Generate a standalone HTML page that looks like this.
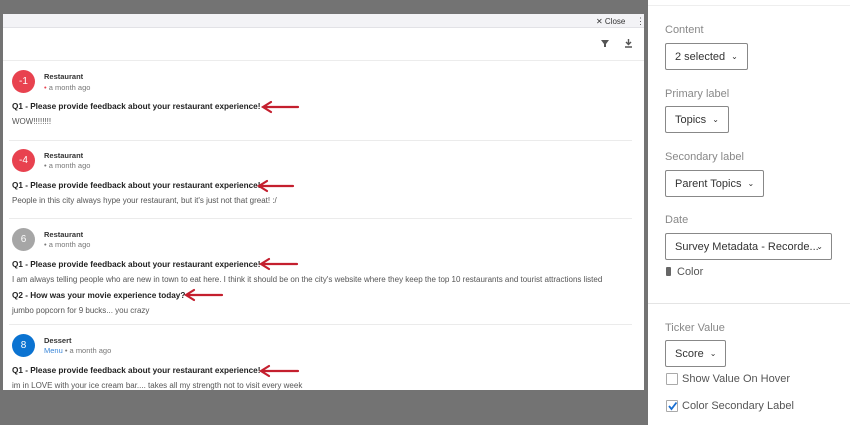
<!DOCTYPE html>
<html><head><style>
*{margin:0;padding:0;box-sizing:border-box}
body{width:850px;height:425px;overflow:hidden;background:#737373;font-family:"Liberation Sans",sans-serif;position:relative}
.a{position:absolute}
.modal{left:3px;top:14px;width:641px;height:376px;background:#fff}
.hdr{left:0;top:0;width:641px;height:14px;background:#f3f3f6;border-bottom:1px solid #e2e2e6}
.tb{left:0;top:46px;width:641px;height:1px;background:#ececec}
.av{width:23px;height:23px;border-radius:50%;color:#fff;font-size:10px;text-align:center;line-height:23px}
.nm{font-size:7.5px;font-weight:bold;color:#333}
.tm{font-size:7.5px;color:#777}
.q{font-size:8.2px;font-weight:bold;color:#222}
.ans{font-size:8px;color:#555}
.sep{left:9px;width:623px;height:1px;background:#ebebeb}
.panel{left:648px;top:0;width:202px;height:425px;background:#fff}
.lbl{font-size:11px;color:#888;left:17px}
.dd{left:17px;height:27px;border:1px solid #888;border-radius:2px;font-size:11px;color:#333;padding:0 9px;display:flex;align-items:center;white-space:nowrap}
.dd span{font-size:8px;margin-left:6px}
.cb{left:18px;width:12px;height:12px;border:1px solid #aaa;border-radius:1px}
.ct{left:34px;font-size:11px;color:#555}
</style></head><body>
<div class="a modal">
 <div class="a hdr"></div>
 <div class="a" style="left:593px;top:3px;font-size:8px;color:#333">✕ Close</div>
 <div class="a" style="left:633px;top:2px;font-size:9px;color:#555">⋮</div>
 <svg class="a" style="left:598px;top:26px" width="9" height="8"><path d="M0 0H8L5 4V7L3 7V4Z" fill="#555"/></svg>
 <svg class="a" style="left:621px;top:25px" width="9" height="9"><path d="M4.5 0V5M2 3L4.5 5.5 7 3M1 8H8" stroke="#555" stroke-width="1.4" fill="none"/></svg>
 <div class="a tb"></div>
</div>
<div class="a av" style="left:12px;top:70px;background:#e8424f">-1</div>
<div class="a nm" style="left:44px;top:72px">Restaurant</div>
<div class="a tm" style="left:44px;top:83px"><span style="color:#e8424f">•</span> a month ago</div>
<div class="a q" style="left:12px;top:102px">Q1 - Please provide feedback about your restaurant experience!</div>
<div class="a ans" style="left:12px;top:117px">WOW!!!!!!!!</div>
<div class="a sep" style="top:140px"></div>

<div class="a av" style="left:12px;top:149px;background:#e8424f">-4</div>
<div class="a nm" style="left:44px;top:151px">Restaurant</div>
<div class="a tm" style="left:44px;top:161px"><span>•</span> a month ago</div>
<div class="a q" style="left:12px;top:181px">Q1 - Please provide feedback about your restaurant experience!</div>
<div class="a ans" style="left:12px;top:196px">People in this city always hype your restaurant, but it's just not that great! :/</div>
<div class="a sep" style="top:218px"></div>

<div class="a av" style="left:12px;top:228px;background:#a6a6a6">6</div>
<div class="a nm" style="left:44px;top:230px">Restaurant</div>
<div class="a tm" style="left:44px;top:240px"><span>•</span> a month ago</div>
<div class="a q" style="left:12px;top:260px">Q1 - Please provide feedback about your restaurant experience!</div>
<div class="a ans" style="left:12px;top:275px">I am always telling people who are new in town to eat here. I think it should be on the city's website where they keep the top 10 restaurants and tourist attractions listed</div>
<div class="a q" style="left:12px;top:291px">Q2 - How was your movie experience today?</div>
<div class="a ans" style="left:12px;top:306px">jumbo popcorn for 9 bucks... you crazy</div>
<div class="a sep" style="top:324px"></div>

<div class="a av" style="left:12px;top:334px;background:#0b73d1">8</div>
<div class="a nm" style="left:44px;top:336px">Dessert</div>
<div class="a tm" style="left:44px;top:346px"><span style="color:#3a86d8">Menu</span> • a month ago</div>
<div class="a q" style="left:12px;top:366px">Q1 - Please provide feedback about your restaurant experience!</div>
<div class="a ans" style="left:12px;top:381px">im in LOVE with your ice cream bar.... takes all my strength not to visit every week</div>

<svg class="a" style="left:0;top:0" width="645" height="390">
 <g stroke="#c41f2e" stroke-width="2.2" fill="none" stroke-linecap="round">
  <path d="M263 107H298M271 102L263 107 271 112"/>
  <path d="M259 186H293M267 181L259 186 267 191"/>
  <path d="M261 264H297M269 259L261 264 269 269"/>
  <path d="M186 295H222M194 290L186 295 194 300"/>
  <path d="M261 371H298M269 366L261 371 269 376"/>
 </g>
</svg>

<div class="a panel">
 <div class="a" style="left:0;top:5px;width:202px;height:1px;background:#eee"></div>
 <div class="a lbl" style="top:24px">Content</div>
 <div class="a dd" style="top:43px">2 selected<span>⌄</span></div>
 <div class="a lbl" style="top:88px">Primary label</div>
 <div class="a dd" style="top:106px">Topics<span>⌄</span></div>
 <div class="a lbl" style="top:151px">Secondary label</div>
 <div class="a dd" style="top:170px">Parent Topics<span>⌄</span></div>
 <div class="a lbl" style="top:214px">Date</div>
 <div class="a dd" style="top:233px;width:167px">Survey Metadata - Recorde...<span style="position:absolute;right:8px">⌄</span></div>
 <div class="a" style="left:18px;top:267px;width:5px;height:9px;background:#666;border-radius:1px"></div>
 <div class="a ct" style="left:29px;top:266px">Color</div>
 <div class="a" style="left:0;top:303px;width:202px;height:1px;background:#e4e4e4"></div>
 <div class="a lbl" style="top:322px">Ticker Value</div>
 <div class="a dd" style="top:340px">Score<span>⌄</span></div>
 <div class="a cb" style="top:373px"></div>
 <div class="a ct" style="top:373px">Show Value On Hover</div>
 <div class="a cb" style="top:400px"></div>
 <svg class="a" style="left:19px;top:401px" width="11" height="10"><path d="M2 5L4.5 8 9.5 1.5" stroke="#1a6fd1" stroke-width="1.8" fill="none"/></svg>
 <div class="a ct" style="top:400px">Color Secondary Label</div>
</div>
</body></html>
